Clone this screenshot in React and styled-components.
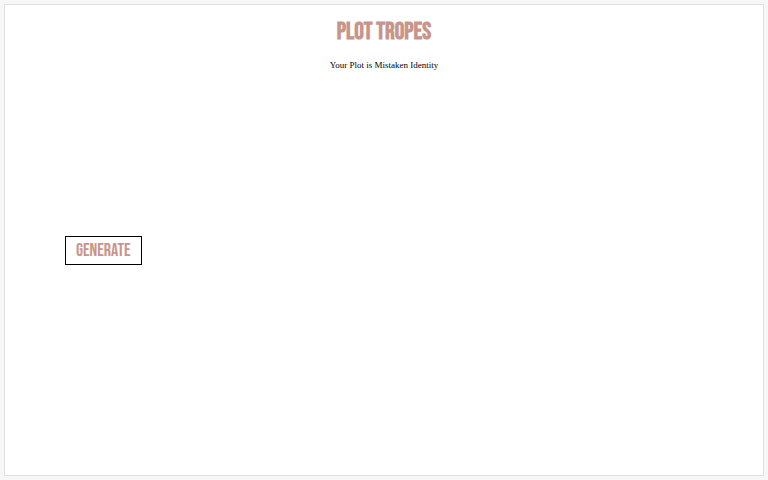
import React, { useState } from "react"
import styled, { createGlobalStyle } from "styled-components"

const GlobalStyle = createGlobalStyle`
  * {
    box-sizing: border-box;
  }
  body {
    margin: 0;
    background: #f7f7f7;
  }
`

const displayFont = `"Bebas Neue", "Liberation Sans Narrow", "Roboto Condensed", sans-serif`

const Page = styled.main`
  display: flex;
  flex-direction: column;
  min-height: calc(100vh - 8px);
  margin: 4px;
  padding: 12px 60px 0;
  background: #fff;
  border: 1px solid #e0e0e0;
`

const Title = styled.h1`
  margin: 0;
  color: #c99489;
  font-family: ${displayFont};
  font-size: 24px;
  font-weight: 700;
  line-height: 30px;
  text-align: center;
`

const Plot = styled.p`
  margin: 12px 0 0;
  color: #000;
  font-family: "Liberation Serif", serif;
  font-size: 9px;
  line-height: 12px;
  text-align: center;
`

const Controls = styled.div`
  display: flex;
  flex: 1;
  align-items: center;
  padding-bottom: 45px;
`

const GenerateButton = styled.button`
  padding: 5px 10px;
  background: #fff;
  border: 1px solid #000;
  color: #c99489;
  font-family: ${displayFont};
  font-size: 18px;
  line-height: 17px;
  cursor: pointer;
`

const plots = [
  "Mistaken Identity",
  "Forbidden Love",
  "A Race Against Time",
  "Sworn Revenge"
]

const App = () => {
  const [index, setIndex] = useState(0)

  return (
    <>
      <GlobalStyle />
      <Page>
        <Title>PLOT TROPES</Title>
        <Plot>Your Plot is {plots[index]}</Plot>
        <Controls>
          <GenerateButton
            type="button"
            onClick={() => setIndex((index + 1) % plots.length)}
          >
            GENERATE
          </GenerateButton>
        </Controls>
      </Page>
    </>
  )
}

export default App
